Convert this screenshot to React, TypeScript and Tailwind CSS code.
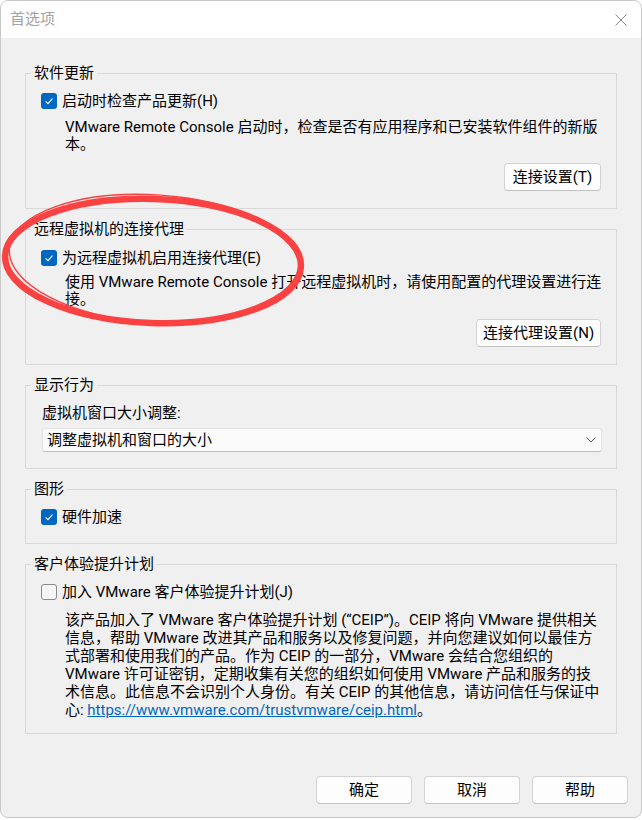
import React from 'react';

const FONT = { fontFamily: 'Roboto, "Noto Sans CJK SC", sans-serif' };

function Check({ checked, label }: { checked: boolean; label: string }) {
    return (
        <div className="flex h-[20px] items-center gap-[5px]">
            {checked ? (
                <span className="flex h-[16px] w-[16px] items-center justify-center rounded-[3px] bg-[#0067c0]">
                    <svg width="16" height="16" viewBox="0 0 16 16">
                        <path d="M4.6 8.4 L7 10.7 L11.4 5.6" fill="none" stroke="#fff" strokeWidth="1.1" />
                    </svg>
                </span>
            ) : (
                <span className="h-[16px] w-[16px] rounded-[3px] border border-[#8a8a8a] bg-[#f6f6f6]" />
            )}
            <span>{label}</span>
        </div>
    );
}

function Group({ title, children, className = '' }: { title: string; children: React.ReactNode; className?: string }) {
    return (
        <fieldset className={`border border-[#d9d9d9] pl-[5px] ${className}`}>
            <legend className="px-[3px] leading-[20px]">{title}</legend>
            {children}
        </fieldset>
    );
}

function Button({ children, className = '' }: { children: React.ReactNode; className?: string }) {
    return (
        <button className={`flex h-[28px] items-center justify-center rounded-[4px] border border-[#d3d3d3] border-b-[#c2c2c2] bg-[#fdfdfd] ${className}`}>
            {children}
        </button>
    );
}

export default function App() {
    return (
        <div className="min-h-screen bg-white text-[15px] text-black" style={FONT}>
            <div className="relative flex h-[818px] w-[642px] flex-col overflow-hidden rounded-lg border border-[#c9c9c9] bg-[#f0f0f0]">
                <div className="flex h-[37px] items-center justify-between bg-white pl-[9px] pr-[14px]">
                    <span className="text-[#a3a3a3]">首选项</span>
                    <svg width="12" height="12" viewBox="0 0 12 12">
                        <path d="M0.5 0.5 L11.5 11.5 M11.5 0.5 L0.5 11.5" stroke="#8a8a8a" strokeWidth="1" />
                    </svg>
                </div>

                <div className="flex flex-col gap-[10px] px-6 pt-[25px]">
                    <Group title="软件更新" className="pb-[17px]">
                        <div className="pl-[10px] pr-[15px]">
                            <div className="mt-[8px]">
                                <Check checked label="启动时检查产品更新(H)" />
                            </div>
                            <div className="mt-[8px] ml-[24px] whitespace-nowrap leading-[17px]">
                                <div>VMware Remote Console 启动时，检查是否有应用程序和已安装软件组件的新版</div>
                                <div>本。</div>
                            </div>
                            <div className="mt-[10px] flex justify-end">
                                <Button className="w-[97px]">连接设置(T)</Button>
                            </div>
                        </div>
                    </Group>

                    <Group title="远程虚拟机的连接代理" className="pb-[17px]">
                        <div className="pl-[10px] pr-[15px]">
                            <div className="mt-[9px]">
                                <Check checked label="为远程虚拟机启用连接代理(E)" />
                            </div>
                            <div className="mt-[6px] ml-[24px] whitespace-nowrap leading-[17px]">
                                <div>使用 VMware Remote Console 打开远程虚拟机时，请使用配置的代理设置进行连</div>
                                <div>接。</div>
                            </div>
                            <div className="mt-[11px] flex justify-end">
                                <Button className="w-[125px]">连接代理设置(N)</Button>
                            </div>
                        </div>
                    </Group>

                    <Group title="显示行为" className="pb-[16px]">
                        <div className="pl-[11px] pr-[14px]">
                            <div className="mt-[8px] leading-[20px]">虚拟机窗口大小调整:</div>
                            <div className="mt-[5px] flex h-[24px] items-center justify-between rounded-[3px] border border-[#e3e3e3] border-b-[#bdbdbd] bg-[#fbfbfb] pl-[4px] pr-[5px]">
                                <span>调整虚拟机和窗口的大小</span>
                                <svg width="10" height="6" viewBox="0 0 10 6">
                                    <path d="M0.5 0.5 L5 5 L9.5 0.5" fill="none" stroke="#555" strokeWidth="1" />
                                </svg>
                            </div>
                        </div>
                    </Group>

                    <Group title="图形" className="pb-[16px]">
                        <div className="pl-[10px] pr-[15px]">
                            <div className="mt-[8px]">
                                <Check checked label="硬件加速" />
                            </div>
                        </div>
                    </Group>

                    <Group title="客户体验提升计划" className="pb-[14px]">
                        <div className="pl-[10px] pr-[15px]">
                            <div className="mt-[8px]">
                                <Check checked={false} label="加入 VMware 客户体验提升计划(J)" />
                            </div>
                            <div className="mt-[9px] ml-[24px] whitespace-nowrap leading-[18px]">
                                <div>该产品加入了 VMware 客户体验提升计划 (“CEIP”)。CEIP 将向 VMware 提供相关</div>
                                <div>信息，帮助 VMware 改进其产品和服务以及修复问题，并向您建议如何以最佳方</div>
                                <div>式部署和使用我们的产品。作为 CEIP 的一部分，VMware 会结合您组织的</div>
                                <div>VMware 许可证密钥，定期收集有关您的组织如何使用 VMware 产品和服务的技</div>
                                <div>术信息。此信息不会识别个人身份。有关 CEIP 的其他信息，请访问信任与保证中</div>
                                <div>
                                    心: <span className="text-[#0067c0] underline">https://www.vmware.com/trustvmware/ceip.html</span>。
                                </div>
                            </div>
                        </div>
                    </Group>
                </div>

                <div className="mt-auto flex justify-end gap-[12px] pb-[13px] pr-[13px]">
                    <Button className="h-[27px] w-[96px]">确定</Button>
                    <Button className="h-[27px] w-[96px]">取消</Button>
                    <Button className="h-[27px] w-[96px]">帮助</Button>
                </div>

                {/* red marker circle over the proxy option */}
                <svg className="pointer-events-none absolute left-0 top-0" width="642" height="818" viewBox="0 0 642 818">
                    <ellipse cx="152" cy="260" rx="148" ry="62" transform="rotate(2 152 260)" fill="none" stroke="#fb4242" strokeWidth="6.5" />
                    <ellipse cx="155" cy="258" rx="147" ry="64" transform="rotate(4 155 258)" fill="none" stroke="#fb4242" strokeWidth="1.4" />
                </svg>
            </div>
        </div>
    );
}
